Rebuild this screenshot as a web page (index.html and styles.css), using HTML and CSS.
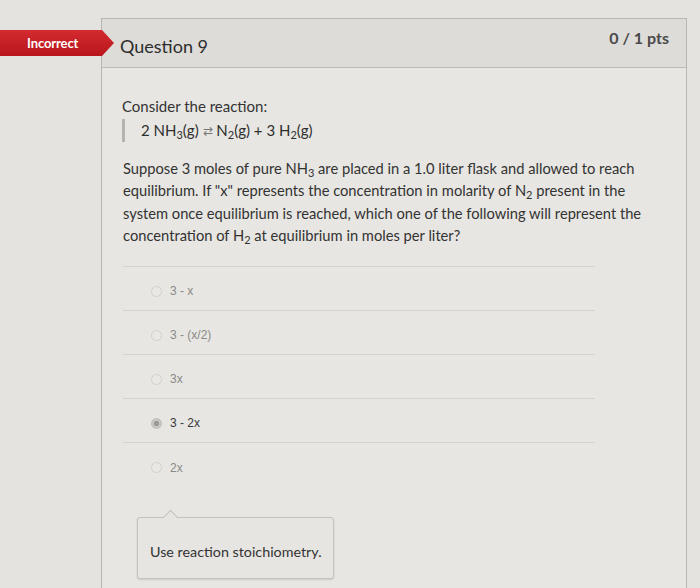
FILE: index.html
```html
<!DOCTYPE html>
<html>
<head>
<meta charset="utf-8">
<link rel="stylesheet" href="styles.css">
</head>
<body>
<div class="page">
  <div class="card">
    <div class="badge">Incorrect</div>
    <div class="card-header">
      <div class="q-title">Question 9</div>
      <div class="q-pts">0 / 1 pts</div>
    </div>
    <div class="card-body">
      <p class="intro">Consider the reaction:</p>
      <div class="equation">2 NH<sub>3</sub>(g) <span class="eq-arrow">&#8644;</span> N<sub>2</sub>(g) + 3 H<sub>2</sub>(g)</div>
      <p class="text">Suppose 3 moles of pure NH<sub>3</sub> are placed in a 1.0 liter flask and allowed to reach equilibrium. If "x" represents the concentration in molarity of N<sub>2</sub> present in the system once equilibrium is reached, which one of the following will represent the concentration of H<sub>2</sub> at equilibrium in moles per liter?</p>
      <div class="answers">
        <div class="answer"><span class="radio"></span><span class="label">3 - x</span></div>
        <div class="answer"><span class="radio"></span><span class="label">3 - (x/2)</span></div>
        <div class="answer"><span class="radio"></span><span class="label">3x</span></div>
        <div class="answer selected"><span class="radio"></span><span class="label">3 - 2x</span></div>
        <div class="answer"><span class="radio"></span><span class="label">2x</span></div>
      </div>
      <div class="comment">Use reaction stoichiometry.</div>
    </div>
  </div>
</div>
</body>
</html>
```

FILE: styles.css
```css
html, body {
  margin: 0;
  padding: 0;
  height: 100%;
  overflow: hidden;
}
body {
  background: #e4e3df;
  font-family: Lato, "Liberation Sans", sans-serif;
  color: #333;
}
.page {
  padding-top: 18px;
  height: 100%;
  box-sizing: border-box;
}
.card {
  position: relative;
  margin-left: 101px;
  width: 586px;
  height: 570px;
  border: 1px solid #b8b7b3;
  border-bottom: none;
  background: #e7e6e2;
  box-sizing: border-box;
}
.badge {
  position: absolute;
  left: -102px;
  top: 11px;
  width: 114px;
  height: 26px;
  background: linear-gradient(#d42a30, #b8161d);
  clip-path: polygon(0 0, 102px 0, 114px 13px, 102px 26px, 0 26px);
  color: #fff;
  font-weight: 700;
  font-size: 13px;
  line-height: 26px;
  padding-left: 27px;
  box-sizing: border-box;
  letter-spacing: -0.1px;
}
.card-header {
  height: 48px;
  background: #dddcd8;
  border-bottom: 1px solid #bcbbb7;
  display: flex;
  justify-content: space-between;
  align-items: flex-start;
  padding: 0 17px 0 18px;
}
.q-title {
  font-size: 18px;
  color: #2d2d2d;
  margin-top: 16px;
}
.q-pts {
  font-size: 16px;
  font-weight: 700;
  color: #4a4a4a;
  margin-top: 9px;
}
.card-body {
  padding: 28px 0 0 20px;
}
.intro {
  margin: 0;
  font-size: 15px;
  line-height: 20px;
}
.equation {
  margin: 3px 0 0 0;
  border-left: 3px solid #b5b4b0;
  padding-left: 16px;
  font-size: 15px;
  line-height: 23px;
  color: #2f2f2f;
}
sub {
  font-size: 11px;
  line-height: 0;
  vertical-align: -3px;
}
.eq-arrow {
  font-size: 12px;
  color: #777;
  vertical-align: 1px;
}
.text {
  margin: 15px 0 0 1px;
  font-size: 14.7px;
  line-height: 22.3px;
  width: 530px;
  color: #333;
}
.answers {
  margin: 20px 0 0 1px;
  width: 472px;
  border-top: 1px solid #d3d2ce;
}
.answer {
  height: 44px;
  border-bottom: 1px solid #d3d2ce;
  box-sizing: border-box;
  display: flex;
  align-items: center;
  padding: 5px 0 0 28px;
  font-family: "Liberation Sans", sans-serif;
  font-size: 12px;
  color: #8a8a88;
}
.answer:last-child {
  border-bottom: none;
}
.radio {
  width: 9px;
  height: 9px;
  border-radius: 50%;
  border: 1px solid #d0cfcb;
  background: #e9e8e4;
  margin-right: 8px;
  flex: none;
}
.answer.selected {
  color: #3a3a3a;
}
.answer.selected .radio {
  background: radial-gradient(circle, #9a9a98 0 2.5px, #c9c8c4 3px);
  border-color: #bdbcb8;
}
.comment {
  position: relative;
  margin: 30px 0 0 15px;
  width: 197px;
  height: 62px;
  border: 1px solid #c3c2be;
  border-radius: 3px;
  box-shadow: 0 1px 2px rgba(0,0,0,0.12);
  box-sizing: border-box;
  padding: 25px 0 0 12px;
  font-size: 14.3px;
  color: #333;
  background: #e6e5e1;
}
.comment::before {
  content: "";
  position: absolute;
  left: 27px;
  top: -6px;
  width: 10px;
  height: 10px;
  background: #e6e5e1;
  border-left: 1px solid #c3c2be;
  border-top: 1px solid #c3c2be;
  transform: rotate(45deg);
}
```
